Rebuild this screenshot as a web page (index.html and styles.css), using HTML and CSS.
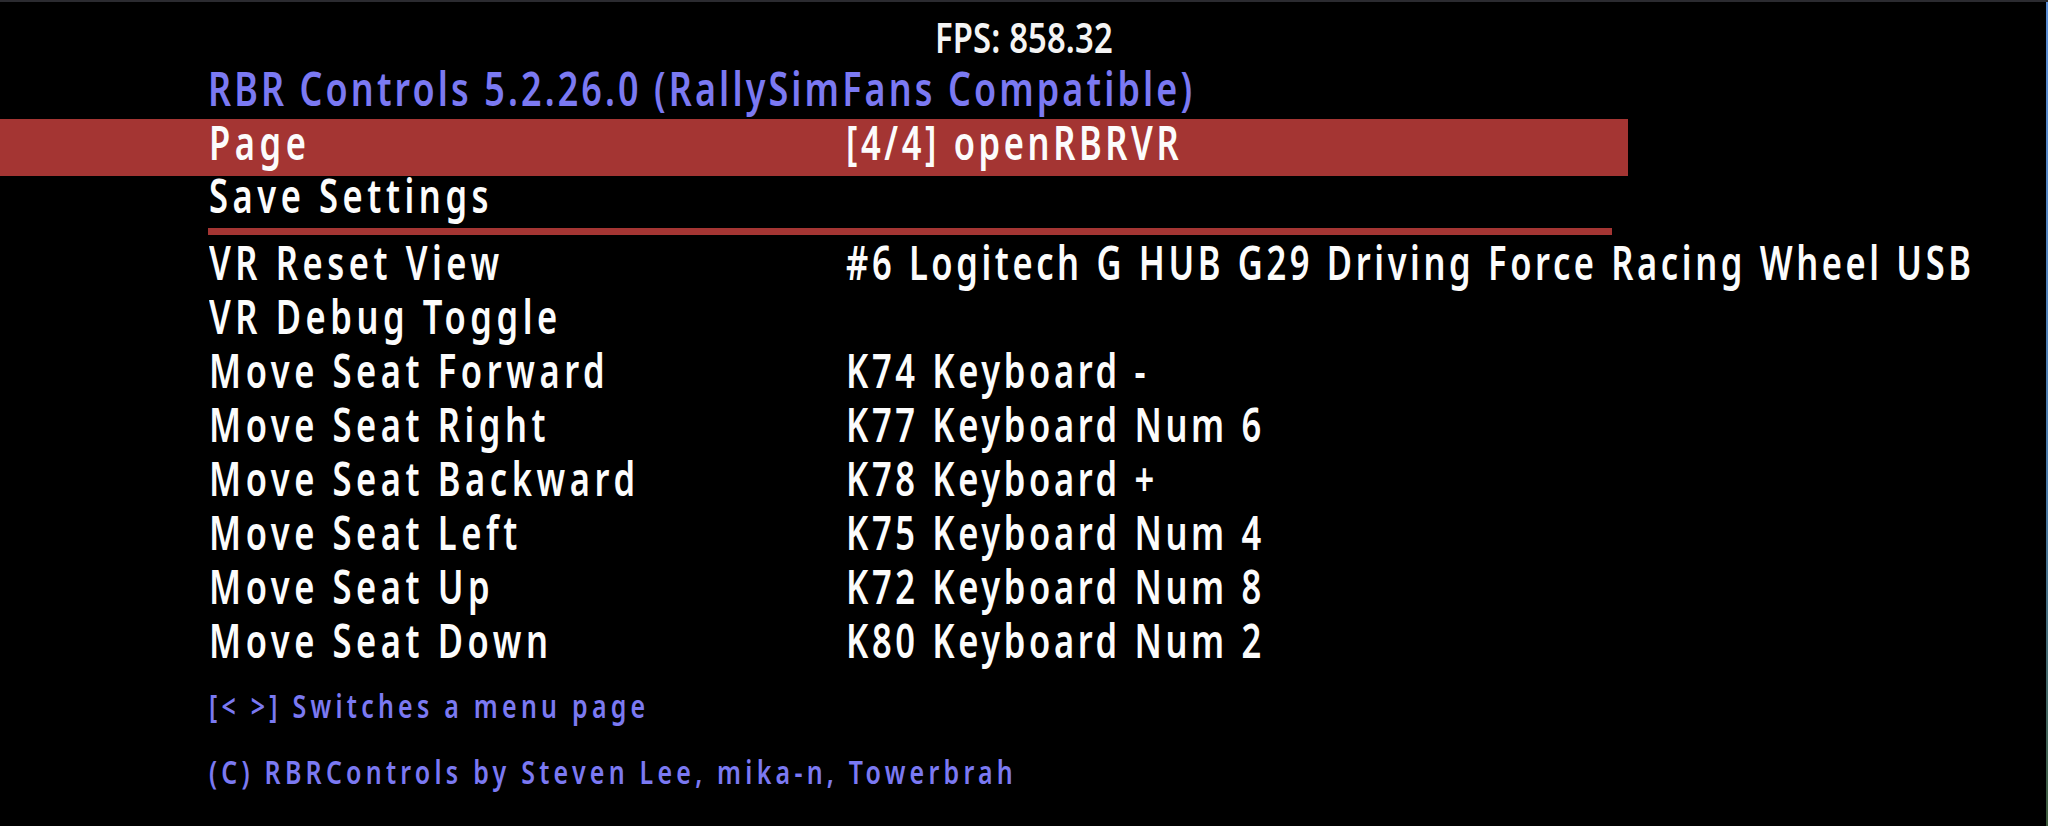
FILE: index.html
```html
<!DOCTYPE html>
<html lang="en">
<head>
<meta charset="utf-8">
<title>RBR Controls</title>
<link rel="stylesheet" href="styles.css">
</head>
<body>
<div class="screen">
  <div class="fps"><span class="txt">FPS: 858.32</span></div>
  <div class="title"><span class="txt">RBR Controls 5.2.26.0 (RallySimFans Compatible)</span></div>
  <div class="row selected">
    <span class="txt">Page</span>
    <span class="txt val">[4/4] openRBRVR</span>
  </div>
  <div class="row save">
    <span class="txt">Save Settings</span>
  </div>
  <div class="divider"></div>
  <div class="binds">
    <div class="row"><span class="txt">VR Reset View</span><span class="txt val">#6 Logitech G HUB G29 Driving Force Racing Wheel USB</span></div>
    <div class="row"><span class="txt">VR Debug Toggle</span><span class="txt val"></span></div>
    <div class="row"><span class="txt">Move Seat Forward</span><span class="txt val">K74 Keyboard -</span></div>
    <div class="row"><span class="txt">Move Seat Right</span><span class="txt val">K77 Keyboard Num 6</span></div>
    <div class="row"><span class="txt">Move Seat Backward</span><span class="txt val">K78 Keyboard +</span></div>
    <div class="row"><span class="txt">Move Seat Left</span><span class="txt val">K75 Keyboard Num 4</span></div>
    <div class="row"><span class="txt">Move Seat Up</span><span class="txt val">K72 Keyboard Num 8</span></div>
    <div class="row"><span class="txt">Move Seat Down</span><span class="txt val">K80 Keyboard Num 2</span></div>
  </div>
  <div class="footer">
    <div class="line"><span class="txt">[&lt; &gt;] Switches a menu page</span></div>
    <div class="line"><span class="txt">(C) RBRControls by Steven Lee, mika-n, Towerbrah</span></div>
  </div>
</div>
</body>
</html>
```

FILE: styles.css
```css
html, body {
  margin: 0;
  padding: 0;
}
body {
  width: 2048px;
  height: 826px;
  overflow: hidden;
  background:
    linear-gradient(#2b2b30, #2b2b30) top left / 100% 2px no-repeat,
    linear-gradient(to bottom, #5c8fd8, #4a7aa8 60%, #3e5a3c) top right / 2px 100% no-repeat,
    #000;
  font-family: "Noto Sans", "Open Sans", sans-serif;
  font-weight: 600;
  color: #fcfcfc;
}
.screen {
  padding-top: 2px;
}
/* the in-game font is a narrow face: squeeze Noto Sans horizontally */
.txt {
  display: inline-block;
  white-space: nowrap;
  transform: scaleX(0.78);
  transform-origin: 0 50%;
}
.fps {
  padding-top: 15px;
  padding-left: 935px;
  height: 40px;
  line-height: 40px;
  font-size: 42px;
  letter-spacing: 0.2px;
  color: #f4f4f4;
}
.title {
  padding-top: 1px;
  padding-left: 208px;
  height: 61px;
  line-height: 61px;
  font-size: 46px;
  letter-spacing: 4px;
  color: #7b79f2;
}
.row {
  display: grid;
  grid-template-columns: 637px 1fr;
  justify-items: start;
  padding-left: 209px;
  height: 54px;
  line-height: 54px;
  font-size: 46px;
  letter-spacing: 6.1px;
}
.row .txt {
  transform: scaleX(0.75);
}
.row .val {
  letter-spacing: 4.8px;
  word-spacing: 1.5px;
}
.row.selected {
  width: 1419px;
  height: 42px;
  line-height: 42px;
  padding-top: 2px;
  padding-bottom: 13px;
  background: #a43533;
}
.row.save {
  height: 38px;
  line-height: 38px;
  padding-bottom: 14px;
}
.divider {
  margin-left: 208px;
  width: 1404px;
  height: 7px;
  background: #a43533;
}
.footer {
  padding-top: 6px;
  padding-left: 209px;
  font-size: 32px;
  line-height: 66px;
  letter-spacing: 5.45px;
  color: #7b79f2;
}
```
